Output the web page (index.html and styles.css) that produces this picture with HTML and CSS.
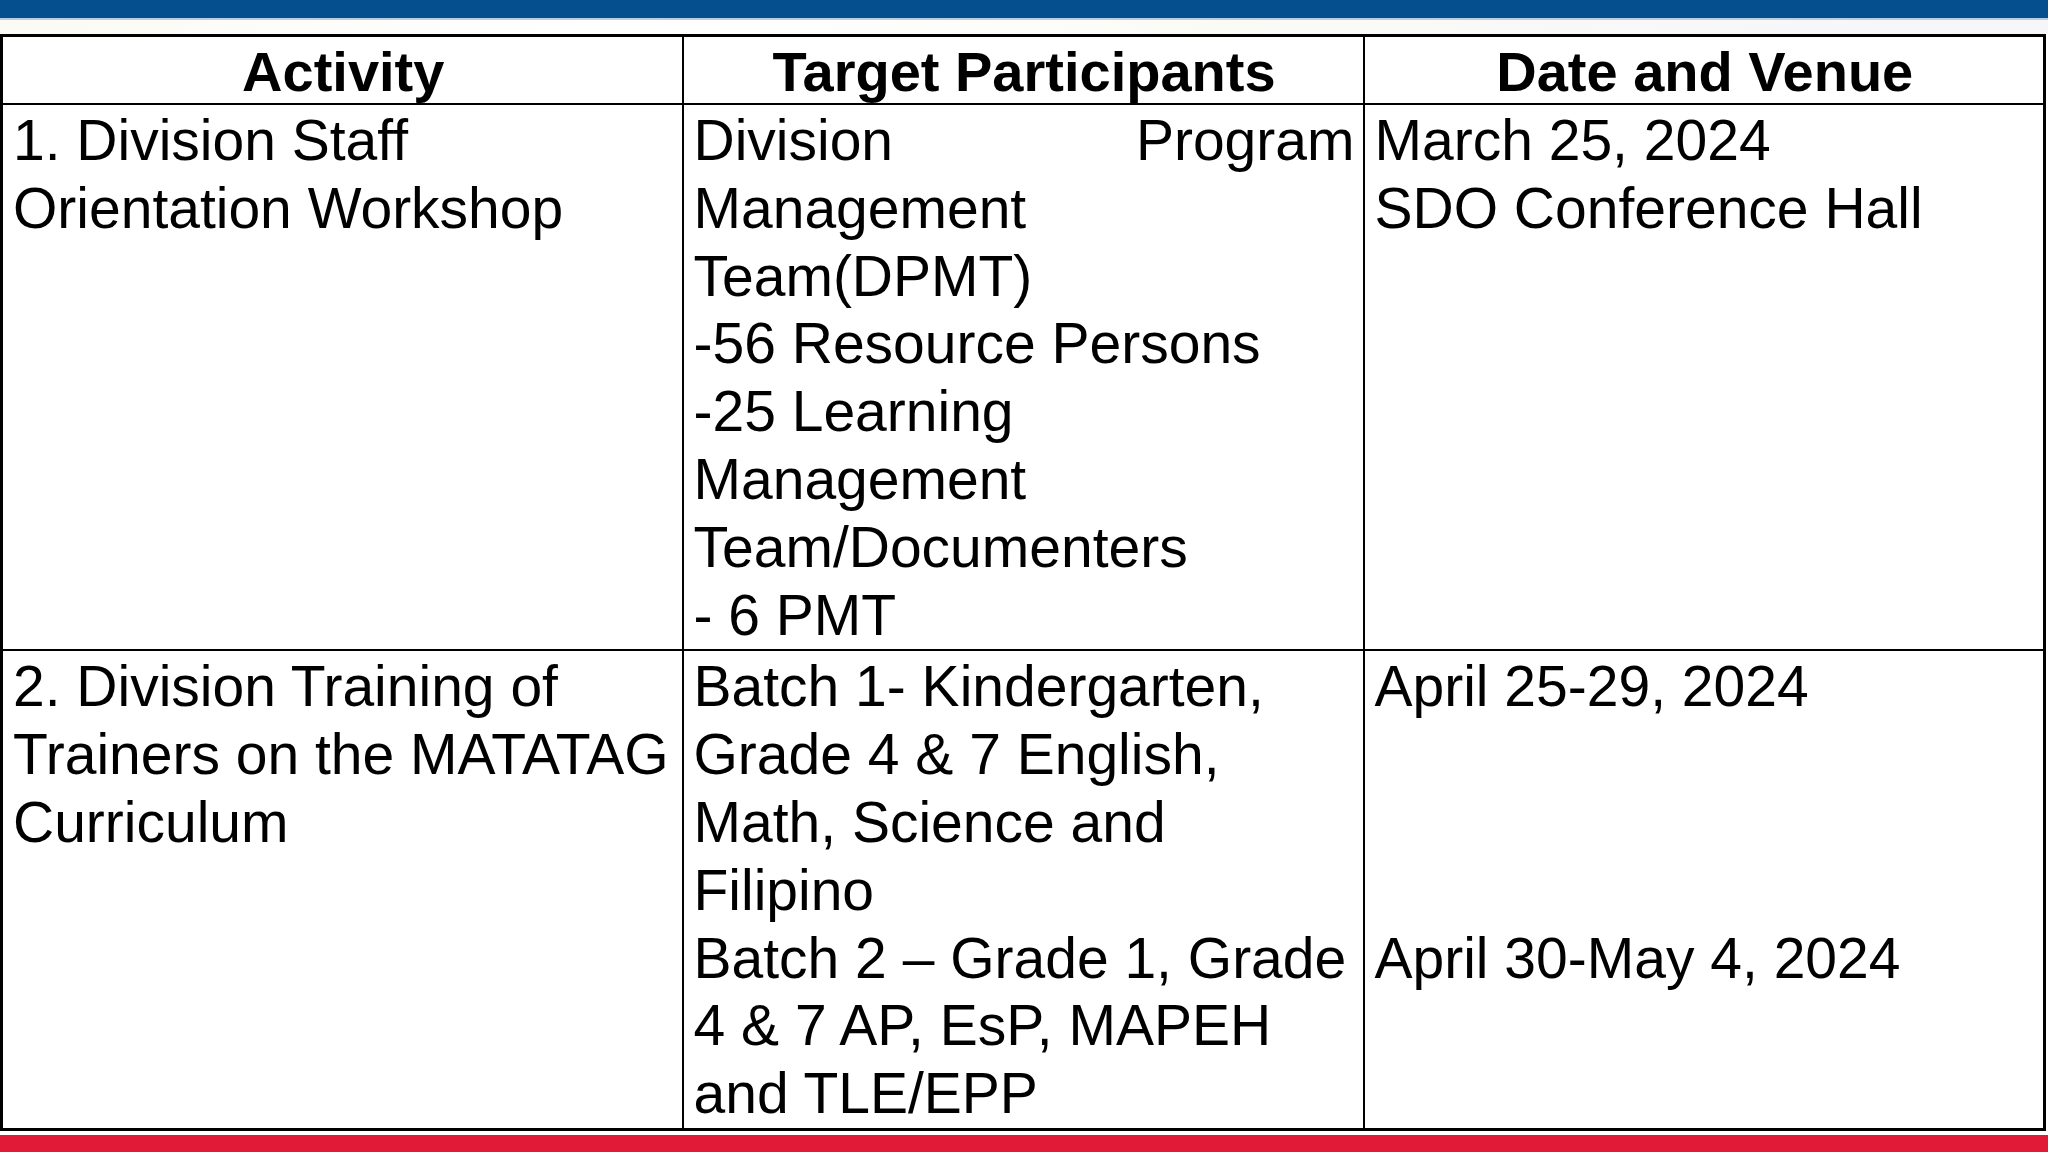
FILE: index.html
```html
<!DOCTYPE html>
<html lang="en">
<head>
<meta charset="utf-8">
<title>Activities</title>
<link rel="stylesheet" href="styles.css">
</head>
<body>
<div class="slide">
  <div class="top-bar"></div>
  <div class="top-strip"></div>
  <table class="schedule">
    <colgroup>
      <col class="col">
      <col class="col">
      <col class="col">
    </colgroup>
    <thead>
      <tr>
        <th>Activity</th>
        <th>Target Participants</th>
        <th>Date and Venue</th>
      </tr>
    </thead>
    <tbody>
      <tr>
        <td>1. Division Staff<br>Orientation Workshop</td>
        <td class="justify">Division Program Management Team(DPMT)<br>-56 Resource Persons<br>-25 Learning<br>Management<br>Team/Documenters<br>- 6 PMT</td>
        <td>March 25, 2024<br>SDO Conference Hall</td>
      </tr>
      <tr>
        <td>2. Division Training of<br>Trainers on the MATATAG<br>Curriculum</td>
        <td>Batch 1- Kindergarten,<br>Grade 4 &amp; 7 English,<br>Math, Science and<br>Filipino<br>Batch 2 – Grade 1, Grade<br>4 &amp; 7 AP, EsP, MAPEH<br>and TLE/EPP</td>
        <td>April 25-29, 2024<br><br><br><br>April 30-May 4, 2024</td>
      </tr>
    </tbody>
  </table>
  <div class="bottom-strip"></div>
  <div class="bottom-bar"></div>
</div>
</body>
</html>
```

FILE: styles.css
```css
html, body {
  margin: 0;
  padding: 0;
  background: #ffffff;
}

.slide {
  width: 2048px;
  height: 1152px;
  display: flex;
  flex-direction: column;
  overflow: hidden;
  font-family: "Liberation Sans", Arial, sans-serif;
  color: #000000;
}

.top-bar {
  height: 18px;
  background: #064f8e;
  border-bottom: 2px solid #b8cde0;
  flex: none;
}

.top-strip {
  height: 14px;
  background: linear-gradient(90deg, #fbfaf4 0%, #ffffff 30%, #fbfbf6 60%, #f4f6f9 100%);
  flex: none;
}

.schedule {
  width: 2046px;
  border-collapse: collapse;
  table-layout: fixed;
  border: 3px solid #000000;
  font-size: 57px;
  line-height: 67.8px;
  flex: none;
}

.schedule th,
.schedule td {
  border: 2px solid #000000;
  padding: 2px 8px 0 10px;
  vertical-align: top;
  text-align: left;
}

.schedule th {
  font-weight: bold;
  font-size: 56px;
  text-align: center;
  padding-top: 4px;
  line-height: 62px;
}

.schedule td.justify {
  text-align: justify;
}

.bottom-strip {
  flex: 1;
  background: #ffffff;
  border-top: 3px solid #ffffff;
  box-sizing: border-box;
}

.bottom-bar {
  height: 17px;
  background: #e11b37;
  flex: none;
}
```
